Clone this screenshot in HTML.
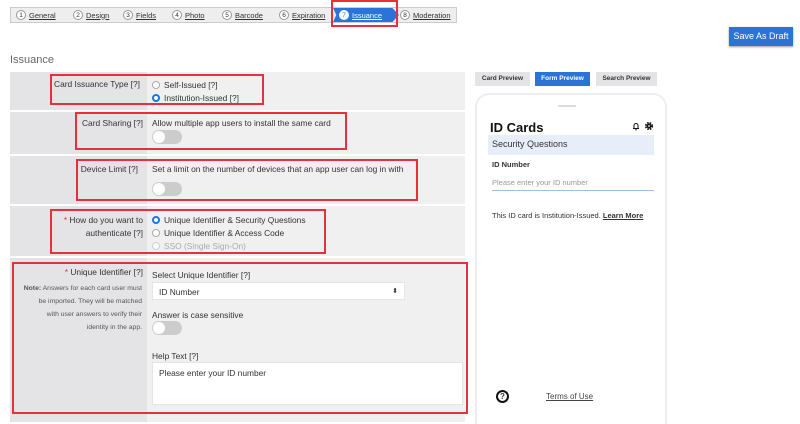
<!DOCTYPE html>
<html><head><style>
*{margin:0;padding:0;box-sizing:border-box}
html,body{overflow:hidden}
body{width:800px;height:424px;background:#fff;font-family:"Liberation Sans",sans-serif;font-size:8.4px;color:#333;position:relative;overflow:hidden}
.a{position:absolute}
.crumb{top:7px;left:10px;width:447px;height:16px;background:#eee;border:1px solid #ccc}
.st{position:absolute;top:0;height:14px;display:flex;align-items:center;font-size:7.5px;color:#333}
.st u{margin-left:3px}
.n{width:10px;height:10px;border:1px solid #999;border-radius:50%;background:#fff;font-size:6.5px;display:flex;align-items:center;justify-content:center}
.red{border:2px solid #e3323c}
.lab{background:#e4e4e6}
.fld{background:#f0f0f0}
.tog{width:30px;height:14px;border-radius:7px;background:#ccc;position:absolute}
.tog:after{content:"";position:absolute;left:1px;top:1px;width:12px;height:12px;border-radius:50%;background:#fff}
.rad{display:inline-block;width:8px;height:8px;border:1px solid #aaa;border-radius:50%;background:#fff;vertical-align:-1px;margin-right:4px}
.on{border:2.5px solid #1a73e8}
.r{text-align:right}
</style></head><body>
<div class="a crumb">
<div class="st" style="left:5px"><span class="n">1</span><u>General</u></div>
<div class="st" style="left:62px"><span class="n">2</span><u>Design</u></div>
<div class="st" style="left:112px"><span class="n">3</span><u>Fields</u></div>
<div class="st" style="left:161px"><span class="n">4</span><u>Photo</u></div>
<div class="st" style="left:211px"><span class="n">5</span><u>Barcode</u></div>
<div class="st" style="left:268px"><span class="n">6</span><u>Expiration</u></div>
<div class="st" style="left:322px;width:66px;background:#2a74d9;color:#fff;padding-left:6px;clip-path:polygon(0 0,90% 0,100% 50%,90% 100%,0 100%,5% 50%)"><span class="n" style="border-color:#fff;color:#2a74d9">7</span><u>Issuance</u></div>
<div class="st" style="left:389px"><span class="n">8</span><u>Moderation</u></div>
</div>
<div class="a red" style="left:331px;top:0;width:67px;height:27px"></div>
<div class="a" style="left:729px;top:27px;width:64px;height:19px;background:#2a74d9;color:#fff;font-size:9px;text-align:center;line-height:19px;box-shadow:0 1px 2px #999">Save As Draft</div>
<div class="a" style="left:10px;top:54px;font-size:11px;color:#666">Issuance</div>

<div class="a lab" style="left:10px;top:72px;width:137px;height:350px"></div>
<div class="a fld" style="left:147px;top:72px;width:318px;height:350px"></div>
<div class="a" style="left:10px;top:110px;width:455px;height:2px;background:#fff"></div>
<div class="a" style="left:10px;top:154px;width:455px;height:2px;background:#fff"></div>
<div class="a" style="left:10px;top:204px;width:455px;height:2px;background:#fff"></div>
<div class="a" style="left:10px;top:256px;width:455px;height:2px;background:#fff"></div>

<div class="a r" style="left:10px;top:79px;width:130px">Card Issuance Type [?]</div>
<div class="a" style="left:152px;top:79px;line-height:13px"><span class="rad"></span>Self-Issued [?]<br><span class="rad on"></span>Institution-Issued [?]</div>
<div class="a red" style="left:50px;top:74px;width:214px;height:31px"></div>

<div class="a r" style="left:10px;top:118px;width:133px">Card Sharing [?]</div>
<div class="a" style="left:152px;top:118px">Allow multiple app users to install the same card</div>
<div class="tog" style="left:152px;top:130px"></div>
<div class="a red" style="left:75px;top:112px;width:272px;height:38px"></div>

<div class="a r" style="left:10px;top:164px;width:128px">Device Limit [?]</div>
<div class="a" style="left:152px;top:164px">Set a limit on the number of devices that an app user can log in with</div>
<div class="tog" style="left:152px;top:182px"></div>
<div class="a red" style="left:76px;top:159px;width:342px;height:42px"></div>

<div class="a r" style="left:10px;top:214px;width:133px;line-height:13px"><span style="color:#e3323c">*</span> How do you want to<br>authenticate [?]</div>
<div class="a" style="left:152px;top:214px;line-height:13px"><span class="rad on"></span>Unique Identifier &amp; Security Questions<br><span class="rad"></span>Unique Identifier &amp; Access Code<br><span style="color:#aaa"><span class="rad" style="border-color:#ccc"></span>SSO (Single Sign-On)</span></div>
<div class="a red" style="left:50px;top:209px;width:276px;height:45px"></div>

<div class="a r" style="left:10px;top:267px;width:133px"><span style="color:#e3323c">*</span> Unique Identifier [?]</div>
<div class="a r" style="left:12px;top:282px;width:130px;font-size:6.8px;line-height:13px;color:#555"><b>Note:</b> Answers for each card user must<br>be imported. They will be matched<br>with user answers to verify their<br>identity in the app.</div>
<div class="a" style="left:152px;top:270px">Select Unique Identifier [?]</div>
<div class="a" style="left:152px;top:282px;width:253px;height:18px;background:#fff;border:1px solid #e5e5e5;padding:4px 6px">ID Number<span style="float:right;font-size:7px">⬍</span></div>
<div class="a" style="left:152px;top:310px">Answer is case sensitive</div>
<div class="tog" style="left:152px;top:321px"></div>
<div class="a" style="left:152px;top:351px">Help Text [?]</div>
<div class="a" style="left:152px;top:362px;width:311px;height:43px;background:#fff;border:1px solid #e5e5e5;padding:5px 6px">Please enter your ID number</div>
<div class="a red" style="left:12px;top:262px;width:456px;height:152px"></div>

<div class="a" style="left:475px;top:72px;width:55px;height:14px;background:#e4e4e6;font-size:6.5px;font-weight:bold;text-align:center;line-height:14px">Card Preview</div>
<div class="a" style="left:535px;top:72px;width:55px;height:14px;background:#2a74d9;color:#fff;font-size:6.5px;font-weight:bold;text-align:center;line-height:14px">Form Preview</div>
<div class="a" style="left:596px;top:72px;width:61px;height:14px;background:#e4e4e6;font-size:6.5px;font-weight:bold;text-align:center;line-height:14px">Search Preview</div>
<div class="a" style="left:475px;top:93px;width:192px;height:331px;border:2px solid #eee;border-bottom:none;border-radius:14px 14px 0 0;background:#fff"></div>
<div class="a" style="left:558px;top:105px;width:18px;height:2px;background:#ddd"></div>
<div class="a" style="left:490px;top:120px;font-size:13px;font-weight:bold;color:#111">ID Cards</div>
<svg class="a" style="left:631px;top:121px" width="24" height="10" viewBox="0 0 24 10"><path d="M2 7.5h6M3 7V4.5a2 2 0 0 1 4 0V7M4.3 8.5a.8.8 0 0 0 1.4 0" fill="none" stroke="#111" stroke-width="1"/><circle cx="18" cy="5" r="3" fill="none" stroke="#111" stroke-width="2.2" stroke-dasharray="1.4 1"/><circle cx="18" cy="5" r="2.4" fill="#111"/><circle cx="18" cy="5" r="0.9" fill="#fff"/></svg>
<div class="a" style="left:488px;top:135px;width:166px;height:20px;background:#e8eef9;font-size:9px;padding:4px">Security Questions</div>
<div class="a" style="left:492px;top:160px;font-size:7.5px;font-weight:bold">ID Number</div>
<div class="a" style="left:492px;top:178px;width:162px;height:13px;border-bottom:1px solid #9fbde8;font-size:7.5px;color:#999">Please enter your ID number</div>
<div class="a" style="left:492px;top:211px;font-size:7.5px">This ID card is Institution-Issued. <b><u>Learn More</u></b></div>
<div class="a" style="left:496px;top:390px;width:13px;height:13px;border:2px solid #111;border-radius:50%;font-size:8px;font-weight:bold;text-align:center;line-height:9px">?</div>
<div class="a" style="left:546px;top:392px;font-size:8px;color:#444"><u>Terms of Use</u></div>
</body></html>
